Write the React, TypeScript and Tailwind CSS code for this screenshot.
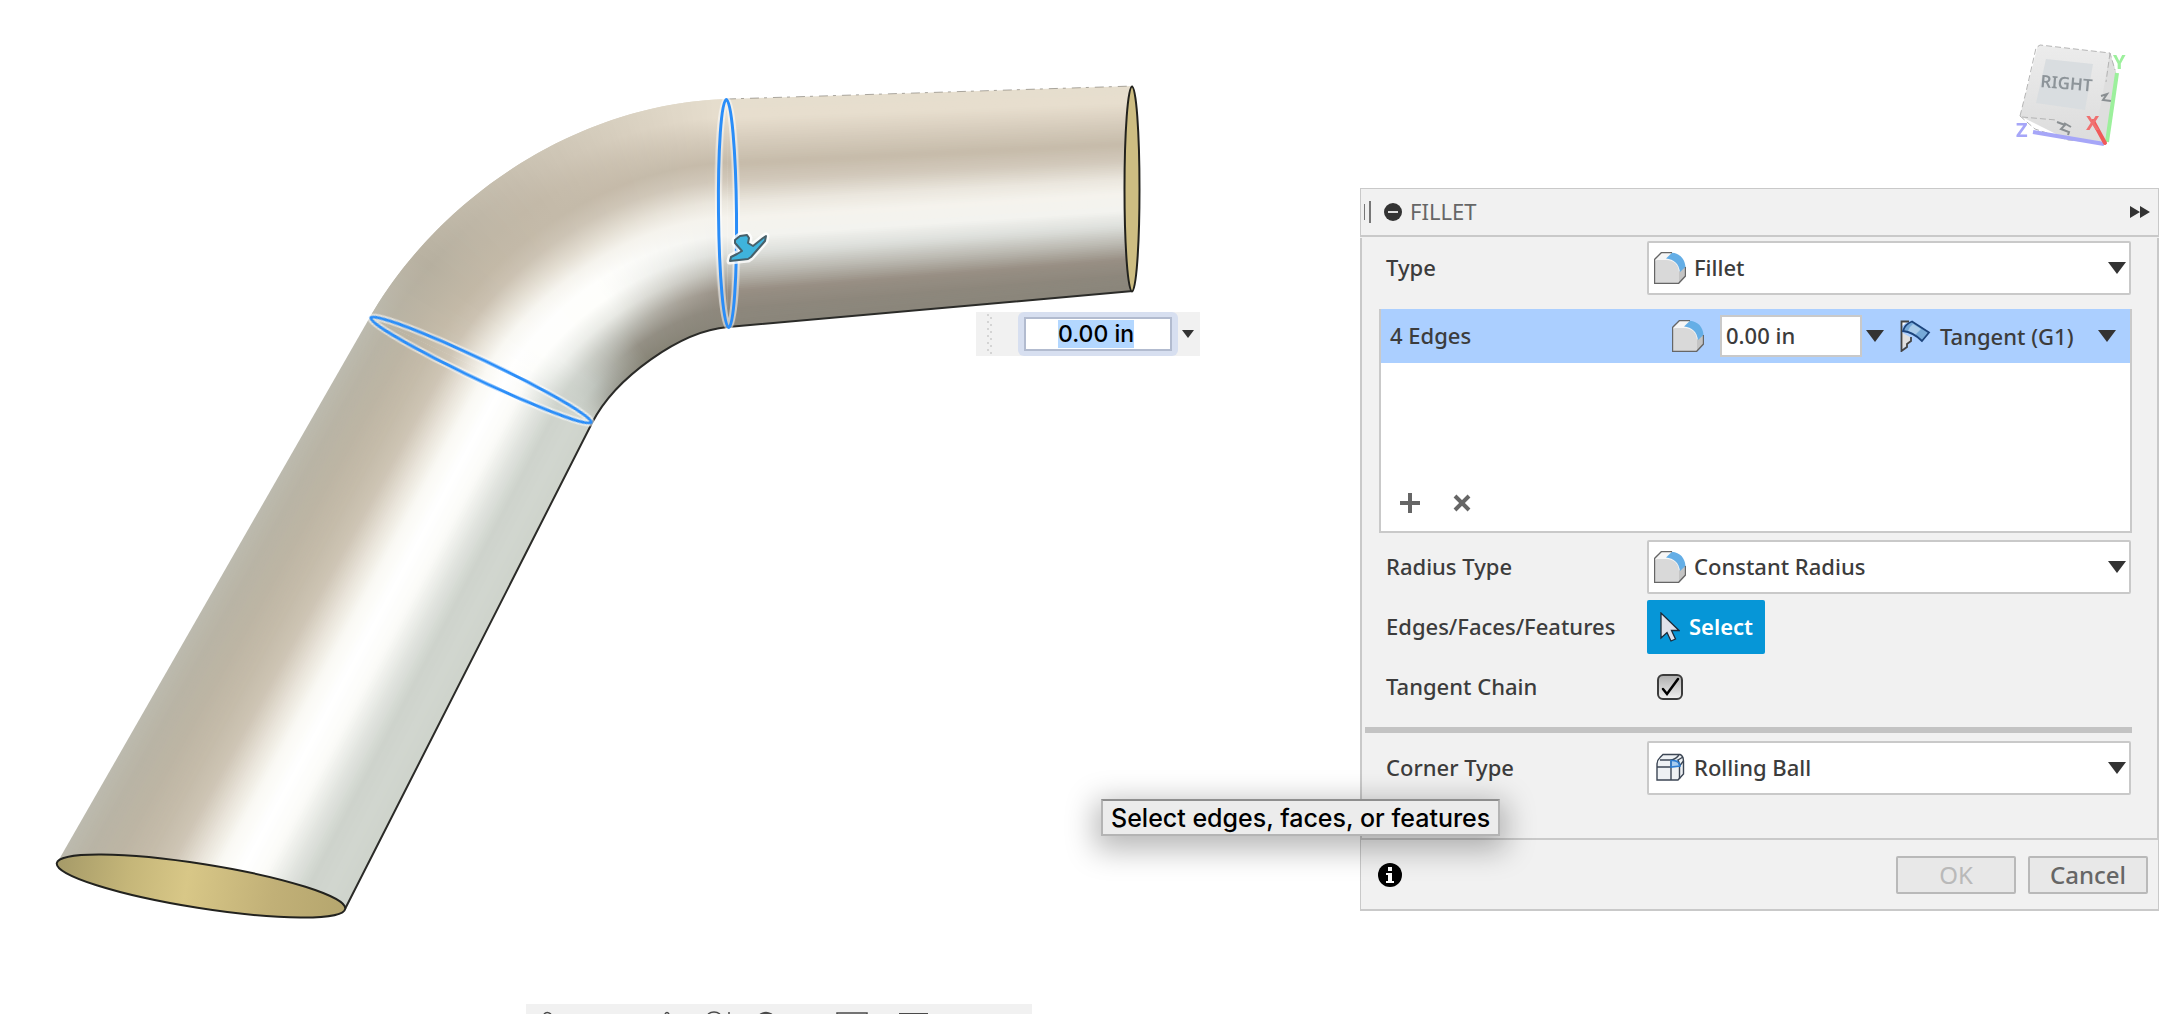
import { useEffect, useRef, useState } from "react";
import type { ReactNode } from "react";

type Point = [number, number];
type Rgb = [number, number, number];
type Profile = Rgb[];

// positions across the tube, outer edge to inner edge
const STOPS = [0, 0.08, 0.18, 0.28, 0.36, 0.45, 0.52, 0.6, 0.68, 0.76, 0.84, 0.92, 1];

const hex = (list: string): Profile =>
  list
    .split(" ")
    .map((c) => [0, 2, 4].map((i) => parseInt(c.slice(i, i + 2), 16)) as Rgb);

const RIGHT_LEG = hex(
  "e6dece e7dece d6ccbc c6bbaa d2c9bb ebe7de f5f3ed f3f3ef dcdeda bbb9b1 988f84 8d877c 8a867b",
);
const BEND_MID = hex(
  "c9c1b1 c6bdad c3b9a8 c4baa9 cdc4b5 e3ddd1 f5f3ed fefefc fefefb e8e9e4 bcbcb4 949085 868375",
);
const BEND_LOW = hex(
  "b9b2a2 b6af9f bcb4a3 c2b8a6 cbc1b1 e6e1d6 f8f7f2 fefefd fefefc eef0ec d0d4ce c0c5be a3a59c",
);
const LEFT_LEG = hex(
  "bcbaae b9b4a5 bdb5a4 c5bcaa cec5b5 e9e4da faf9f4 ffffff fbfbf8 e3e6e1 ced3cc d1d6cf ced3cb",
);

const KEYS: [number, Profile][] = [
  [0, RIGHT_LEG],
  [0.5, BEND_MID],
  [0.8, BEND_LOW],
  [1, LEFT_LEG],
];

const mix = (a: number, b: number, t: number) => a + (b - a) * t;
const mixPoint = (a: Point, b: Point, t: number): Point => [mix(a[0], b[0], t), mix(a[1], b[1], t)];
const mixRgb = (a: Rgb, b: Rgb, t: number) => a.map((v, i) => mix(v, b[i], t)) as Rgb;
const css = (c: Rgb) => `rgb(${c.map(Math.round).join(",")})`;
const pts = (list: Point[]) => list.map((p) => p.map((v) => v.toFixed(2)).join(",")).join(" ");

function sample(profile: Profile, t: number) {
  let i = 0;
  while (i < STOPS.length - 2 && t > STOPS[i + 1]) i++;
  return mixRgb(profile[i], profile[i + 1], (t - STOPS[i]) / (STOPS[i + 1] - STOPS[i]));
}

function bendProfile(s: number): Profile {
  let i = 0;
  while (i < KEYS.length - 2 && s > KEYS[i + 1][0]) i++;
  const t = (s - KEYS[i][0]) / (KEYS[i + 1][0] - KEYS[i][0]);
  return KEYS[i][1].map((c, n) => mixRgb(c, KEYS[i + 1][1][n], t));
}

function bezier(p: Point[], t: number): Point {
  if (p.length === 1) return p[0];
  return bezier(
    p.slice(1).map((q, i) => mixPoint(p[i], q, t)),
    t,
  );
}

const OUTER: Point[] = [[727, 99], [570, 104], [435, 204], [370, 317]];
const INNER: Point[] = [[728, 327], [680, 331], [615, 378], [592, 423]];

function Leg({ from, to, profile }: { from: Point[]; to: Point[]; profile: Profile }) {
  const count = 120;
  return (
    <g>
      {Array.from({ length: count }, (_, i) => {
        const a = i / count;
        const b = Math.min(1, (i + 2) / count);
        return (
          <polygon
            key={i}
            fill={css(sample(profile, a))}
            points={pts([
              mixPoint(from[0], from[1], a),
              mixPoint(to[0], to[1], a),
              mixPoint(to[0], to[1], b),
              mixPoint(from[0], from[1], b),
            ])}
          />
        );
      })}
    </g>
  );
}

function Bend() {
  const count = 90;
  return (
    <g>
      {Array.from({ length: count }, (_, i) => {
        const s = i / count;
        const next = Math.min(1, (i + 2) / count);
        const a = bezier(OUTER, s);
        const b = bezier(INNER, s);
        return (
          <g key={i}>
            <linearGradient
              id={`bend-${i}`}
              gradientUnits="userSpaceOnUse"
              x1={a[0]}
              y1={a[1]}
              x2={b[0]}
              y2={b[1]}
            >
              {bendProfile(s).map((c, n) => (
                <stop key={n} offset={STOPS[n]} stopColor={css(c)} />
              ))}
            </linearGradient>
            <polygon
              fill={`url(#bend-${i})`}
              points={pts([a, bezier(OUTER, next), bezier(INNER, next), b])}
            />
          </g>
        );
      })}
    </g>
  );
}

function PipeModel() {
  return (
    <svg width="1200" height="940" viewBox="0 0 1200 940" className="block" aria-hidden="true">
      <defs>
        <linearGradient id="inside" x1="0" x2="1">
          <stop offset="0" stopColor="#a59a68" />
          <stop offset="0.25" stopColor="#c5b679" />
          <stop offset="0.45" stopColor="#d8c787" />
          <stop offset="0.75" stopColor="#c1b077" />
          <stop offset="1" stopColor="#b5a66e" />
        </linearGradient>
      </defs>
      <Leg from={[[727, 99], [728, 327]]} to={[[1133, 86], [1133, 291]]} profile={RIGHT_LEG} />
      <Leg from={[[370, 317], [592, 423]]} to={[[57, 863], [345, 909]]} profile={LEFT_LEG} />
      <Bend />
      <path d="M727 99 1133 86" stroke="#5f5a50" strokeDasharray="9 5 3 6" opacity="0.5" />
      <path
        d="M1133 291 728 327C680 331 615 378 592 423L345 909"
        fill="none"
        stroke="#2b2b28"
        strokeWidth="2"
      />
      <ellipse cx="1132" cy="189" rx="7.5" ry="102.5" fill="#cdbd82" stroke="#22221e" strokeWidth="2" />
      <ellipse
        cx="201"
        cy="886"
        rx="146"
        ry="22"
        transform="rotate(9 201 886)"
        fill="url(#inside)"
        stroke="#22221e"
        strokeWidth="2"
      />
      <g fill="none">
        <g stroke="#fff" strokeWidth="7" opacity="0.55">
          <ellipse cx="727.5" cy="213.5" rx="9" ry="114" transform="rotate(-.6 727.5 213.5)" />
          <ellipse cx="481" cy="370" rx="122" ry="10" transform="rotate(25.4 481 370)" />
        </g>
        <g stroke="#2a8df8" strokeWidth="3">
          <ellipse cx="727.5" cy="213.5" rx="9" ry="114" transform="rotate(-.6 727.5 213.5)" />
          <ellipse cx="481" cy="370" rx="122" ry="10" transform="rotate(25.4 481 370)" />
        </g>
      </g>
      <path
        d="M735 240 740 236 747 235 749 238 748 243 753 246 763 238 766 236 765 241 751 257 748 259 730 261 731 257 737 254 742 251 735 243Z"
        fill="#3fb3dc"
        stroke="#fff"
        strokeWidth="7"
        strokeLinejoin="round"
        opacity="0.8"
      />
      <path
        d="M735 240 740 236 747 235 749 238 748 243 753 246 763 238 766 236 765 241 751 257 748 259 730 261 731 257 737 254 742 251 735 243Z"
        fill="#3fb3dc"
        stroke="#47606a"
        strokeWidth="2"
        strokeLinejoin="round"
      />
    </svg>
  );
}

function ViewCube() {
  return (
    <svg width="180" height="150" viewBox="0 0 180 150" className="block blur-[0.5px]" aria-hidden="true">
      <defs>
        <linearGradient id="cube" x1="0" x2="0" y1="0" y2="1">
          <stop offset="0" stopColor="#ececec" />
          <stop offset="1" stopColor="#dcdcdc" />
        </linearGradient>
      </defs>
      <path d="M58 25 130 33 136 52 126 122 88 120 40 96Z" fill="url(#cube)" />
      <path d="M130 33 136 52 126 122 118 100Z" fill="#dedede" />
      <path d="M66 39 113 44 105 90 56 83Z" fill="#d9dde0" />
      <g fill="none" stroke="#b4b4b4" strokeDasharray="6 3">
        <path d="M40 96 46 72 56 28 60 25 130 33 135 50M130 33 126 62M40 96 55 109 88 120 122 122M42 97 76 100" />
      </g>
      <g fill="none" stroke="#8a8f92" strokeWidth="2">
        <path d="M77 102 85 105 81 109 89 112 88 115M84 103 91 107M121 76 127 74 123 80 131 81" />
      </g>
      <text
        x="60"
        y="67"
        transform="rotate(5 60 67)"
        fontFamily="Noto Sans, sans-serif"
        fontSize="17"
        fontWeight="600"
        fill="#8d9499"
      >
        RIGHT
      </text>
      <path d="M137 53 127 122" stroke="#9cf09c" strokeWidth="4" />
      <path d="M53 112 124 124" stroke="#a6a6f8" strokeWidth="4" />
      <path d="M113 101 125 123" stroke="#f05a5a" strokeWidth="4" strokeLinecap="round" />
      <g fontFamily="Noto Sans, sans-serif" fontSize="20" fontWeight="700">
        <text x="133" y="49" fill="#9cf09c">Y</text>
        <text x="36" y="117" fill="#a6a6f8">Z</text>
        <text x="106" y="110" fill="#f07070">X</text>
      </g>
    </svg>
  );
}

function FilletIcon() {
  return (
    <svg width="32" height="32" viewBox="0 0 32 32" className="block" aria-hidden="true">
      <path d="M.5 7.5 7.500.5H18L31.500 15V24L24.500 31.500H.5Z" fill="#f6f6f6" />
      <path d="M24.500 31V20L31.500 14.500V24L25 31Z" fill="#c4c4c4" />
      <path d="M1 31V9.500Q1 8 3 8H12C20 8 25 13 25 21V31Z" fill="#d9d9d9" />
      <path d="M12 6.500 18 .8C26 1.500 31 7 31.500 15L26 20C25 12 20 7 12 6.500Z" fill="#64aee6" />
      <path
        d="M18 .5H7.500L.5 7.500V31.500H24.500L31.500 24V15"
        fill="none"
        stroke="#666"
        strokeWidth="1.400"
      />
    </svg>
  );
}

function RollingBallIcon() {
  return (
    <svg width="32" height="32" viewBox="0 0 32 32" className="block" aria-hidden="true">
      <path d="M3 28V12Q3 8 7 5L10 2H26Q30 3 30 9V22L24 28Z" fill="#eef1f4" />
      <path d="M17 9.500 24 7Q27 10 26.500 14H17Z" fill="#a9cdf0" />
      <g fill="none" stroke="#3c4654" strokeWidth="1.400">
        <path d="M3 28V13Q3 8 6 5.500L9 2.500H26Q29.500 4 29.500 9V22L24 28Z" />
        <path d="M6 8H16Q21 8 25 3M3 15H17M17 28V9M25.500 27V14L29.500 9M26 14 24 8 29 5" />
      </g>
      <path d="M17 15V8.500Q25 8 26 14Z" fill="none" stroke="#2d7dd2" strokeWidth="1.600" />
    </svg>
  );
}

function TangentIcon() {
  return (
    <svg width="32" height="32" viewBox="0 0 32 32" className="block" aria-hidden="true">
      <path d="M1 1H8L1 7Z" fill="#fff" />
      <path d="M1 12 10 17Q12 19 10 23L1 30Z" fill="#e0e0e0" />
      <path
        d="M9 1.500H1.500V31L7 27V24L11 21V17"
        fill="none"
        stroke="#444"
        strokeWidth="1.800"
      />
      <path d="M12 1 29.500 12.500 22 21.500Q13 12 3 11.500Q5 4 12 1Z" fill="#76a9d8" />
      <path d="M13 4 21 9 15 15Q12 12 8 11Q9 7 13 4Z" fill="#a9cbea" />
      <path
        d="M12 1.500 29 12.500 22 21Q13 12 3 11Q5 4 12 1.500Z"
        fill="none"
        stroke="#1d447c"
        strokeWidth="1.800"
      />
    </svg>
  );
}

function Caret({ className }: { className?: string }) {
  return (
    <svg width="18" height="12" viewBox="0 0 18 12" className={className} aria-hidden="true">
      <path d="M0 0H18L9 12Z" fill="#333" />
    </svg>
  );
}

function Dropdown({ id, value, icon }: { id: string; value: string; icon: ReactNode }) {
  return (
    <div className="relative mr-[26px] flex-1">
      <span className="pointer-events-none absolute inset-y-0 left-[7px] flex items-center">{icon}</span>
      <select
        id={id}
        defaultValue={value}
        className="block h-[54px] w-full appearance-none rounded-xs border-2 border-[#c9c9c9] bg-white pr-8 pb-[3px] pl-[45px] text-[22px] font-medium text-[#3c3c3c] outline-none"
      >
        <option>{value}</option>
      </select>
      <Caret className="pointer-events-none absolute inset-y-0 right-[5px] my-auto" />
    </div>
  );
}

function Row({ label, htmlFor, children }: { label: string; htmlFor: string; children: ReactNode }) {
  return (
    <div className="flex h-[60px] items-center pl-6">
      <label htmlFor={htmlFor} className="w-[261px] shrink-0 pb-[3px] whitespace-nowrap">
        {label}
      </label>
      {children}
    </div>
  );
}

function SelectionList() {
  return (
    <div className="mt-[11px] mr-[25px] mb-1 ml-[17px] flex h-56 flex-col justify-between border-2 border-t-0 border-[#c9c9c9] bg-white">
      <div className="flex h-[54px] items-center bg-[#abcfff] pl-[9px]">
        <span className="flex-1 pb-[3px]">4 Edges</span>
        <FilletIcon />
        <input
          aria-label="Radius"
          defaultValue="0.00 in"
          className="ml-4 h-[42px] w-[142px] border-2 border-[#c9c9c9] bg-white px-1 pb-[3px] font-medium outline-none"
        />
        <button aria-label="Radius options" className="ml-1">
          <Caret />
        </button>
        <span className="ml-4">
          <TangentIcon />
        </span>
        <button className="ml-2 flex w-[176px] items-center justify-between font-medium">
          Tangent (G1)
          <Caret />
        </button>
        <span className="w-[14px]" />
      </div>
      <div className="flex gap-8 px-[18px] pb-[17px]">
        <button aria-label="Add selection">
          <svg width="22" height="22" viewBox="0 0 22 22" aria-hidden="true">
            <path d="M11 1V21M1 11H21" stroke="#666" strokeWidth="4" />
          </svg>
        </button>
        <button aria-label="Remove selection">
          <svg width="20" height="22" viewBox="0 0 20 22" aria-hidden="true">
            <path d="M2 4 16 18M16 4 2 18" stroke="#666" strokeWidth="4" />
          </svg>
        </button>
      </div>
    </div>
  );
}

function FilletPanel() {
  const [chain, setChain] = useState(true);

  return (
    <section className="w-[799px] bg-[#f1f1f1] text-[22px] leading-7 font-medium text-[#3c3c3c]">
      <header className="flex h-[49px] items-center border border-b-2 border-[#c9c9c9] pr-2 pl-[3px]">
        <span className="flex items-center gap-1">
          <span className="h-4 w-px bg-[#777]" />
          <span className="h-[22px] w-[2px] bg-[#777]" />
        </span>
        <button aria-label="Collapse" className="ml-[13px]">
          <svg width="18" height="18" viewBox="0 0 18 18" aria-hidden="true">
            <circle cx="9" cy="9" r="9" fill="#333" />
            <path d="M4 9H14" stroke="#ddd" strokeWidth="2" />
          </svg>
        </button>
        <h2 className="ml-2 flex-1 pb-[3px] font-normal text-[#666]">FILLET</h2>
        <button aria-label="Expand">
          <svg width="20" height="12" viewBox="0 0 20 12" aria-hidden="true">
            <path d="M0 0 10 6 0 12ZM10 0 20 6 10 12Z" fill="#333" />
          </svg>
        </button>
      </header>

      <div className="mt-px border-x-2 border-[#c9c9c9] pb-10">
        <Row label="Type" htmlFor="type">
          <Dropdown id="type" value="Fillet" icon={<FilletIcon />} />
        </Row>
        <SelectionList />
        <Row label="Radius Type" htmlFor="radius-type">
          <Dropdown id="radius-type" value="Constant Radius" icon={<FilletIcon />} />
        </Row>
        <Row label="Edges/Faces/Features" htmlFor="pick">
          <button
            id="pick"
            className="flex h-[54px] w-[118px] items-center rounded-xs bg-[#0696d7] pl-[13px] font-semibold text-white"
          >
            <svg width="20" height="30" viewBox="0 0 20 30" className="mr-[9px]" aria-hidden="true">
              <path
                d="M1 1V26L7 20.500 11 29 15.500 27 11.500 18.500H19Z"
                fill="#dfe1ea"
                stroke="#1c2a38"
                strokeWidth="1.300"
              />
            </svg>
            <span className="pb-[3px]">Select</span>
          </button>
        </Row>
        <Row label="Tangent Chain" htmlFor="chain">
          <span className="relative ml-[10px] h-[26px] w-[26px]">
            <input
              id="chain"
              type="checkbox"
              checked={chain}
              onChange={(e) => setChain(e.target.checked)}
              className="block size-[26px] appearance-none rounded-md border-2 border-[#3c3c3c] bg-linear-to-b from-[#b0b0b0] to-[#efefef]"
            />
            {chain && (
              <svg
                width="26"
                height="26"
                viewBox="0 0 26 26"
                className="pointer-events-none absolute inset-0"
                aria-hidden="true"
              >
                <path d="M6 15 10 20 21 5" fill="none" stroke="#000" strokeWidth="2.500" strokeLinecap="round" />
              </svg>
            )}
          </span>
        </Row>
        <hr className="mt-[10px] mr-[25px] mb-[5px] ml-[3px] border-t-[6px] border-[#c3c3c3]" />
        <Row label="Corner Type" htmlFor="corner-type">
          <Dropdown id="corner-type" value="Rolling Ball" icon={<RollingBallIcon />} />
        </Row>
      </div>

      <footer className="flex h-[73px] items-center gap-3 border border-t-2 border-b-2 border-[#c9c9c9] pr-[10px] pl-[17px] text-2xl font-normal">
        <button aria-label="Information" className="mr-auto">
          <svg width="24" height="24" viewBox="0 0 24 24" aria-hidden="true">
            <circle cx="12" cy="12" r="12" fill="#000" />
            <path d="M10 4H14V8H10ZM8 10H14V18H16V20H8V18H10V12H8Z" fill="#fff" />
          </svg>
        </button>
        <button disabled className="h-[38px] w-[120px] rounded-xs border-2 border-[#b9b9b9] bg-[#e8e8e8] leading-8 text-[#b9b9b9]">
          OK
        </button>
        <button className="h-[38px] w-[120px] rounded-xs border-2 border-[#b9b9b9] bg-[#e8e8e8] leading-8 font-medium text-[#666]">
          Cancel
        </button>
      </footer>
    </section>
  );
}

function RadiusInput() {
  const ref = useRef<HTMLInputElement>(null);

  useEffect(() => {
    ref.current?.focus();
    ref.current?.select();
  }, []);

  return (
    <div className="flex h-11 w-[224px] items-center bg-[#f1f1f1] pl-[10px]">
      <svg width="8" height="40" viewBox="0 0 8 40" className="mr-6" aria-hidden="true">
        <path d="M2 0V40" stroke="#d4d4d4" strokeWidth="2" strokeDasharray="2 5" />
        <path d="M5 3V40" stroke="#d4d4d4" strokeWidth="2" strokeDasharray="2 5" />
      </svg>
      <span className="flex h-11 w-40 items-center justify-center rounded-md bg-[#d7dff0]">
        <input
          ref={ref}
          aria-label="Radius value"
          defaultValue="0.00 in"
          className="h-[34px] w-[148px] border-2 border-[#b2bbcf] bg-white pr-1 text-center font-[Inter,sans-serif] text-[23px] leading-[26px] font-medium text-black outline-none selection:bg-[#b3d7ff] selection:text-black"
        />
      </span>
      <svg width="12" height="8" viewBox="0 0 12 8" className="ml-1" aria-hidden="true">
        <path d="M0 0H12L6 8Z" fill="#333" />
      </svg>
    </div>
  );
}

function NavigationBar() {
  return (
    <div className="h-[10px] w-[506px] bg-[#f1f1f1]">
      <svg width="506" height="10" viewBox="0 0 506 10" aria-hidden="true">
        <g fill="none" stroke="#4a4a4a" strokeWidth="1.500">
          <path d="M18 10Q21 7 25 10M139 10Q141 7 143 10M182 10Q188 6 194 10M203 8V10M311 10V9H341V10" />
          <path d="M235 10Q240 7 245 10Z" fill="#333" />
        </g>
        <path d="M373 9H402V10H373Z" fill="#4a4a4a" />
      </svg>
    </div>
  );
}

export default function App() {
  return (
    <main className="relative h-screen overflow-hidden bg-white font-['Noto_Sans',sans-serif]">
      <PipeModel />
      <div className="absolute top-5 right-2">
        <ViewCube />
      </div>
      <div className="absolute top-[312px] left-[976px]">
        <RadiusInput />
      </div>
      <div className="absolute top-[188px] right-[9px]">
        <FilletPanel />
      </div>
      <div
        role="tooltip"
        className="absolute top-[799px] left-[1101px] border-2 border-[#b4b4b4] border-t-[#8e8e8e] bg-[#ececec] px-2 pt-px font-[Inter,sans-serif] text-[25px] leading-8 font-medium whitespace-nowrap text-black shadow-[0_8px_30px_6px_rgba(0,0,0,0.28)]"
      >
        Select edges, faces, or features
      </div>
      <div className="absolute bottom-0 left-[526px]">
        <NavigationBar />
      </div>
    </main>
  );
}
